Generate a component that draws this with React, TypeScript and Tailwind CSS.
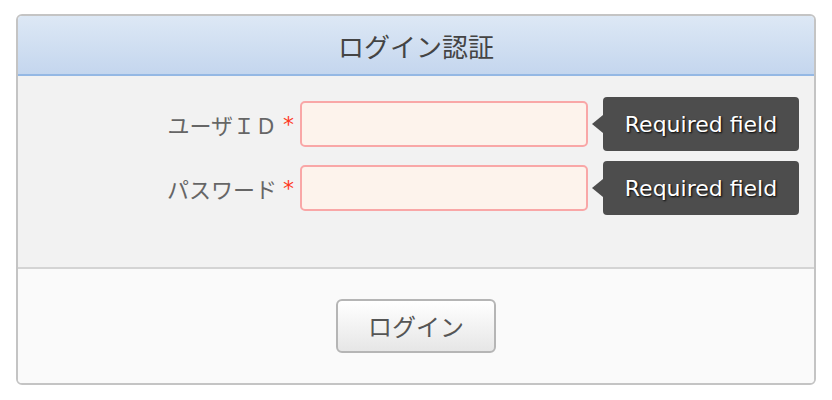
const jp = "font-['Noto_Sans_CJK_JP','Noto_Sans',sans-serif]";

const Field = ({ label, type }: { label: string; type: string }) => {
  return (
    <div className="flex h-[54px] items-center">
      {/* label */}
      <label className={`flex w-[282px] items-center justify-end pr-[6px] text-[22px] text-[#666] ${jp}`}>
        {label}
        <span className="ml-[6px] font-['DejaVu_Sans',sans-serif] text-[22px] text-[#ff3b1f]">*</span>
      </label>
      <input
        type={type}
        className="h-[46px] w-[288px] rounded-[5px] border-2 border-[#f9a7a7] bg-[#fdf3ec] px-2 outline-none"
      />
      {/* tooltip */}
      <div className="relative ml-[15px] flex h-[54px] w-[196px] items-center justify-center rounded-[4px] bg-[#4d4d4d]">
        <span className="absolute left-[-11px] top-[18px] h-0 w-0 border-y-[9px] border-r-[11px] border-y-transparent border-r-[#4d4d4d]" />
        <span className="font-['DejaVu_Sans',sans-serif] text-[22px] text-white [text-shadow:1px_1px_2px_#000]">
          Required field
        </span>
      </div>
    </div>
  );
};

export default function App() {
  return (
    <div className="min-h-[400px] bg-white pt-[14px] pl-4">
      <div className="w-[800px] overflow-hidden rounded-[6px] border-2 border-[#c4c4c4]">
        {/* header */}
        <div className="flex h-[60px] items-center justify-center border-b-2 border-[#94b8e4] bg-gradient-to-b from-[#dde8f5] to-[#c4d6ee]">
          <h1 className={`text-[26px] font-normal text-[#444] ${jp}`}>ログイン認証</h1>
        </div>
        {/* body */}
        <div className="flex flex-col gap-[10px] bg-[#f2f2f2] pt-[21px] pb-[52px]">
          <Field label="ユーザＩＤ" type="text" />
          <Field label="パスワード" type="password" />
        </div>
        {/* footer */}
        <div className="flex justify-center border-t-2 border-[#d4d4d4] bg-[#fafafa] pt-[30px] pb-[30px]">
          <button
            className={`h-[54px] w-[160px] rounded-[6px] border-2 border-[#b5b5b5] bg-gradient-to-b from-white to-[#e6e6e6] text-[24px] text-[#555] ${jp}`}
          >
            ログイン
          </button>
        </div>
      </div>
    </div>
  );
}
